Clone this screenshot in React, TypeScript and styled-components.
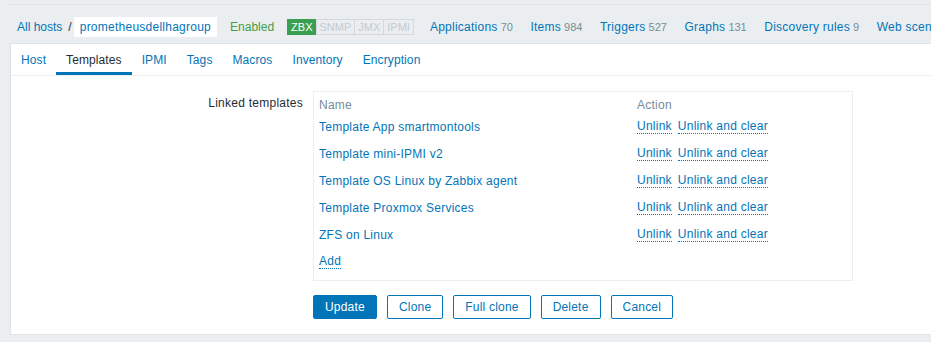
import React from "react";
import styled, { createGlobalStyle } from "styled-components";

const GlobalStyle = createGlobalStyle`
  html, body {
    margin: 0;
    padding: 0;
    background: #ebeef0;
    font-family: "Liberation Sans", Arial, sans-serif;
    font-size: 12px;
    line-height: 14px;
    letter-spacing: 0.25px;
    color: #1f2c33;
    overflow: hidden;
  }
  * { box-sizing: border-box; }
`;

const Page = styled.div`
  padding-left: 10px;
  width: 1200px;
`;

const TopRule = styled.div`
  height: 5px;
  border-bottom: 1px solid #dfe4e7;
`;

const HostNav = styled.div`
  display: flex;
  align-items: center;
  padding: 12px 0 6px 7px;
  white-space: nowrap;
`;

const Breadcrumbs = styled.div`
  display: flex;
  align-items: center;
`;

const NavLink = styled.a`
  color: #0275b8;
  text-decoration: none;
  cursor: pointer;
`;

const CrumbLink = styled(NavLink)`
  letter-spacing: 0;
`;

const Sep = styled.span`
  margin: 0 2px 0 6px;
  color: #1f2c33;
  letter-spacing: 0;
`;

const CurrentHost = styled.span`
  background: #ffffff;
  color: #0275b8;
  padding: 3px 6px;
  height: 20px;
`;

const Status = styled.span`
  margin-left: 13px;
  color: #429e47;
  letter-spacing: 0;
`;

const Badges = styled.div`
  display: flex;
  margin-left: 13px;
`;

const Badge = styled.span<{ $on?: boolean }>`
  font-size: 11px;
  line-height: 14px;
  letter-spacing: 0;
  padding: 0 3px;
  border: 1px solid ${(p) => (p.$on ? "#3a9f50" : "#d3d9dd")};
  background: ${(p) => (p.$on ? "#3a9f50" : "transparent")};
  color: ${(p) => (p.$on ? "#ffffff" : "#c3cbd0")};
  & + & {
    margin-left: -1px;
  }
`;

const SectionLinks = styled.div`
  display: flex;
  gap: 17.5px;
  margin-left: 16px;
`;

const Count = styled.span`
  font-size: 11px;
  letter-spacing: 0;
  color: #768d99;
`;

const Panel = styled.div`
  background: #ffffff;
  border: 1px solid #dfe4e7;
  padding-bottom: 15px;
`;

const TabBar = styled.div`
  display: flex;
  border-bottom: 1px solid #ebeef0;
`;

const Tab = styled.a<{ $active?: boolean }>`
  padding: 9px 10px 5px;
  letter-spacing: 0.1px;
  border-bottom: 3px solid ${(p) => (p.$active ? "#0275b8" : "transparent")};
  color: ${(p) => (p.$active ? "#1f2c33" : "#0275b8")};
  text-decoration: none;
  cursor: pointer;
`;

const Form = styled.div`
  display: grid;
  grid-template-columns: 292px auto;
  column-gap: 10px;
  padding-top: 15px;
`;

const Label = styled.div`
  text-align: right;
  padding-top: 5px;
  color: #1f2c33;
`;

const Field = styled.div`
  display: flex;
  flex-direction: column;
`;

const LinkedBox = styled.div`
  width: 540px;
  border: 1px solid #ebeef0;
  padding-bottom: 5px;
`;

const HeaderRow = styled.div`
  display: grid;
  grid-template-columns: 318px 1fr;
  height: 21px;
  padding-top: 6px;
  color: #768d99;
`;

const Row = styled.div`
  display: grid;
  grid-template-columns: 318px 1fr;
  align-items: center;
  height: 27px;
`;

const Cell = styled.div`
  padding: 0 5px;
`;

const Actions = styled.div`
  display: flex;
  gap: 6px;
  padding: 0 5px;
`;

const DottedLink = styled.a`
  color: #0275b8;
  text-decoration: none;
  border-bottom: 1px dotted #0275b8;
  cursor: pointer;
`;

const AddCell = styled.div`
  display: flex;
  padding: 0 5px;
`;

const ButtonRow = styled.div`
  display: flex;
  gap: 10px;
  margin-top: 14px;
`;

const Button = styled.button<{ $primary?: boolean }>`
  height: 24px;
  padding: 0 11px;
  border: 1px solid #0275b8;
  border-radius: 2px;
  font-family: "Liberation Sans", Arial, sans-serif;
  font-size: 12px;
  line-height: 14px;
  letter-spacing: 0.2px;
  background: ${(p) => (p.$primary ? "#0275b8" : "#ffffff")};
  color: ${(p) => (p.$primary ? "#ffffff" : "#0275b8")};
  cursor: pointer;
`;

const sections: [string, string][] = [
  ["Applications", "70"],
  ["Items", "984"],
  ["Triggers", "527"],
  ["Graphs", "131"],
  ["Discovery rules", "9"],
  ["Web scenarios", ""],
];

const tabs = ["Host", "Templates", "IPMI", "Tags", "Macros", "Inventory", "Encryption"];

const templates = [
  "Template App smartmontools",
  "Template mini-IPMI v2",
  "Template OS Linux by Zabbix agent",
  "Template Proxmox Services",
  "ZFS on Linux",
];

export default function App() {
  return (
    <>
      <GlobalStyle />
      <Page>
        <TopRule />
        <HostNav>
          <Breadcrumbs>
            <CrumbLink>All hosts</CrumbLink>
            <Sep>/</Sep>
            <CurrentHost>prometheusdellhagroup</CurrentHost>
          </Breadcrumbs>
          <Status>Enabled</Status>
          <Badges>
            <Badge $on>ZBX</Badge>
            <Badge>SNMP</Badge>
            <Badge>JMX</Badge>
            <Badge>IPMI</Badge>
          </Badges>
          <SectionLinks>
            {sections.map(([name, count]) => (
              <span key={name}>
                <NavLink>{name}</NavLink>
                {count && <Count> {count}</Count>}
              </span>
            ))}
          </SectionLinks>
        </HostNav>
        <Panel>
          <TabBar>
            {tabs.map((t) => (
              <Tab key={t} $active={t === "Templates"}>
                {t}
              </Tab>
            ))}
          </TabBar>
          <Form>
            <Label>Linked templates</Label>
            <Field>
              <LinkedBox>
                <HeaderRow>
                  <Cell>Name</Cell>
                  <Cell>Action</Cell>
                </HeaderRow>
                {templates.map((t) => (
                  <Row key={t}>
                    <Cell>
                      <NavLink>{t}</NavLink>
                    </Cell>
                    <Actions>
                      <DottedLink>Unlink</DottedLink>
                      <DottedLink>Unlink and clear</DottedLink>
                    </Actions>
                  </Row>
                ))}
                <Row>
                  <AddCell>
                    <DottedLink>Add</DottedLink>
                  </AddCell>
                </Row>
              </LinkedBox>
              <ButtonRow>
                <Button $primary>Update</Button>
                <Button>Clone</Button>
                <Button>Full clone</Button>
                <Button>Delete</Button>
                <Button>Cancel</Button>
              </ButtonRow>
            </Field>
          </Form>
        </Panel>
      </Page>
    </>
  );
}
